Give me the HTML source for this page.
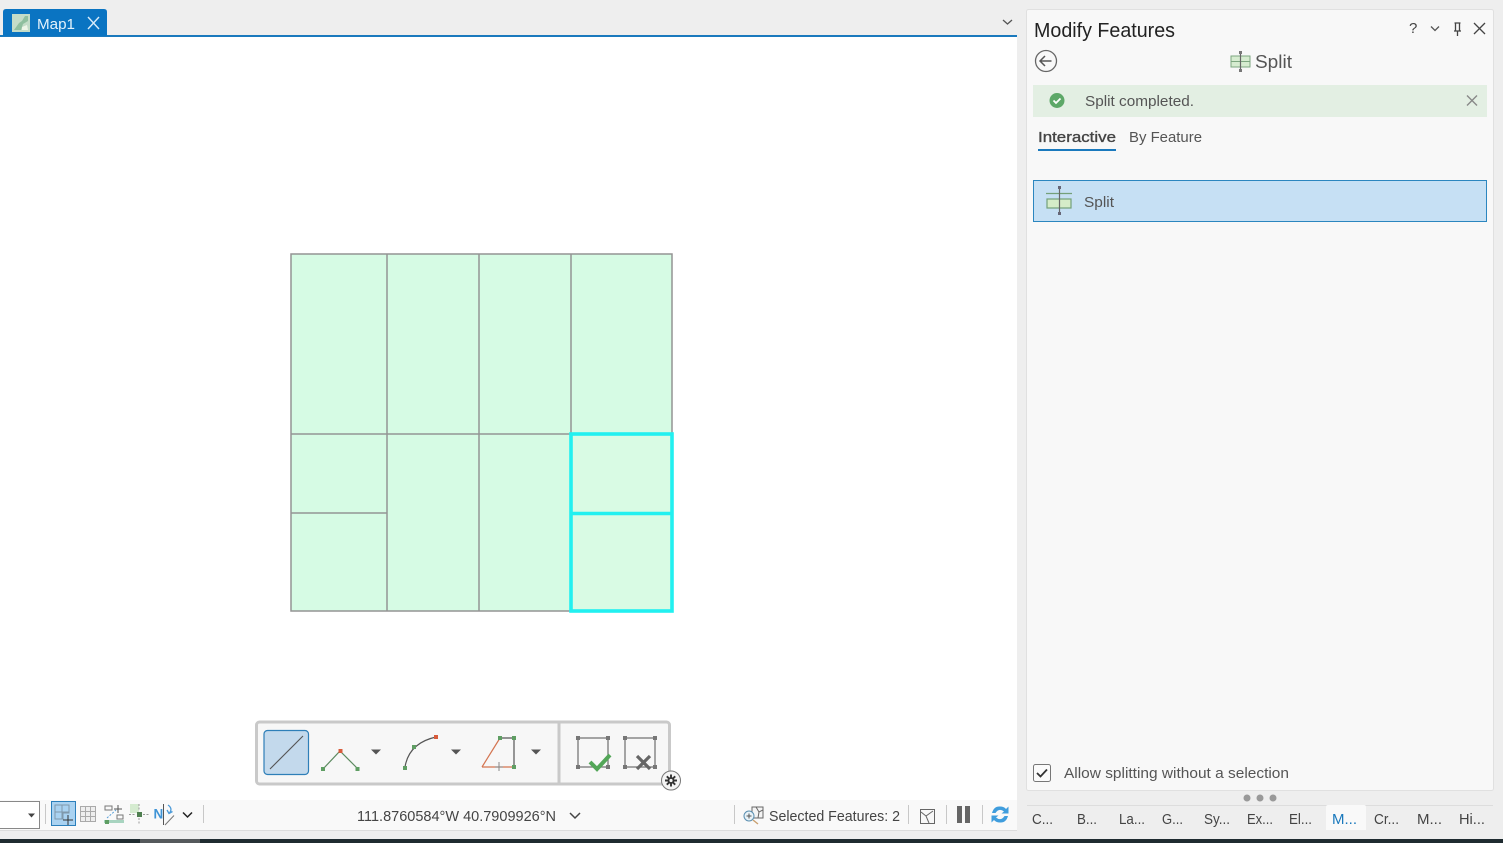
<!DOCTYPE html>
<html><head><meta charset="utf-8"><style>
html,body{margin:0;padding:0;background:#eee;overflow:hidden}
svg{display:block}
text{font-family:"Liberation Sans",sans-serif;fill:#444;font-size:14.5px}
</style></head><body>
<svg width="1503" height="843" viewBox="0 0 1503 843" xmlns="http://www.w3.org/2000/svg">
<rect width="1503" height="843" fill="#eeeeee"/>
<!-- map area -->
<rect x="0" y="37" width="1017" height="763" fill="#ffffff"/>
<rect x="0" y="35" width="1017" height="2" fill="#1a79bd"/>
<!-- tab -->
<path d="M3 36V12q0-3 3-3h98q3 0 3 3v24z" fill="#0a74c2"/>
<rect x="12" y="14" width="18" height="18" fill="#c3dcc8"/>
<path d="M14 30l5-7 3-2 3-5h3v5l-5 3-2 6z" fill="#8fbf9f"/><path d="M22 27l5-2 1 5h-6z" fill="#eef5e8"/>
<text x="37" y="29" style="fill:#e3f1fb;font-size:15px" textLength="38" lengthAdjust="spacingAndGlyphs">Map1</text>
<path d="M88 17l11 12M99 17l-11 12" stroke="#d9ecfa" stroke-width="1.4" fill="none"/>
<path d="M1003 20l4.500 4 4.500-4" stroke="#555" stroke-width="1.3" fill="none"/>
<!-- grid -->
<rect x="291" y="254" width="381" height="357" fill="#d6fbe4" stroke="#949494" stroke-width="1.500"/>
<path d="M387 254V611M479 254V611M571 254V433M291 434H571M291 513H387" stroke="#949494" stroke-width="1.500" fill="none"/>
<rect x="571" y="434" width="101" height="177" fill="#d9fbe4" stroke="#22f0f0" stroke-width="3.600"/>
<path d="M571 513.500H672" stroke="#22f0f0" stroke-width="3.600"/>
<!-- toolbar -->
<rect x="256.500" y="722" width="413" height="62" rx="3" fill="#f7f7f7" stroke="#c9c9c9" stroke-width="3"/>
<rect x="557.500" y="722" width="3" height="62" fill="#c9c9c9"/>
<rect x="264" y="730.500" width="44.500" height="44" rx="3.500" fill="#c3d9ec" stroke="#2e7fb8" stroke-width="1.200"/>
<path d="M270 769l33-33" stroke="#555" stroke-width="1.100"/>
<path d="M323 769l17-18 18 18" stroke="#5c8a60" stroke-width="1.200" fill="none"/>
<rect x="321" y="767" width="4" height="4" fill="#5f9e63"/><rect x="355.500" y="767" width="4" height="4" fill="#5f9e63"/><rect x="338.500" y="749" width="4" height="4" fill="#d85c3c"/>
<path d="M371 749.500h10l-5 5z" fill="#555"/>
<path d="M405 767q4-24 31-30" stroke="#555" stroke-width="1.200" fill="none"/>
<rect x="403" y="766" width="4" height="4" fill="#5f9e63"/><rect x="412" y="745" width="4" height="4" fill="#5f9e63"/><rect x="434" y="735" width="4" height="4" fill="#d85c3c"/>
<path d="M451 749.500h10l-5 5z" fill="#555"/>
<path d="M482 767l18-29" stroke="#d47450" stroke-width="1.200" fill="none"/><path d="M482 767h32" stroke="#d47450" stroke-width="1.200" fill="none"/>
<path d="M500 738h14v29" stroke="#555" stroke-width="1.200" fill="none"/>
<path d="M499 762v9M495 767h8" stroke="#888" stroke-width="1"/>
<rect x="498" y="736" width="4" height="4" fill="#5f9e63"/><rect x="512" y="736" width="4" height="4" fill="#5f9e63"/><rect x="512" y="765" width="4" height="4" fill="#5f9e63"/>
<path d="M531 749.500h10l-5 5z" fill="#555"/>
<rect x="578" y="738" width="30" height="29" fill="none" stroke="#777" stroke-width="1.300"/>
<g fill="#777"><rect x="576" y="736" width="4" height="4"/><rect x="606" y="736" width="4" height="4"/><rect x="576" y="765" width="4" height="4"/><rect x="606" y="765" width="4" height="4"/></g>
<path d="M590 762l7 7 13-14" stroke="#53a658" stroke-width="4" fill="none"/>
<rect x="625" y="738" width="30" height="29" fill="none" stroke="#777" stroke-width="1.300"/>
<g fill="#777"><rect x="623" y="736" width="4" height="4"/><rect x="653" y="736" width="4" height="4"/><rect x="623" y="765" width="4" height="4"/><rect x="653" y="765" width="4" height="4"/></g>
<path d="M637 756l13 13M650 756l-13 13" stroke="#666" stroke-width="3.200"/>
<circle cx="671" cy="780.500" r="9.500" fill="#f4f4f4" stroke="#777" stroke-width="1"/>
<path d="M671 774.500v12M665 780.500h12M666.800 776.300l8.400 8.400M675.200 776.300l-8.400 8.400" stroke="#333" stroke-width="1.900"/>
<circle cx="671" cy="780.500" r="3.400" fill="#333"/>
<circle cx="671" cy="780.500" r="1.600" fill="#f4f4f4"/>
<!-- status bar -->
<rect x="0" y="800" width="1017" height="30" fill="#f9f9f9"/>
<rect x="0" y="830" width="1017" height="1" fill="#dcdcdc"/>
<rect x="-2" y="801.500" width="41.500" height="27" fill="#fff" stroke="#888" stroke-width="1"/>
<path d="M28 813.500h7l-3.500 4z" fill="#444"/>
<rect x="45" y="804" width="1" height="20" fill="#c8c8c8"/>
<rect x="51.500" y="801.500" width="24" height="24" fill="#a9d2f1" stroke="#2b7fbb" stroke-width="1"/>
<path d="M55 805h14v8h-6v6h-8zM55 812h14M62 805v14" fill="none" stroke="#7f98ab" stroke-width="1"/>
<path d="M68 815v10M63 820h10" stroke="#333" stroke-width="1"/>
<rect x="80.500" y="806.500" width="15" height="15" fill="#eee" stroke="#aaa"/>
<path d="M85.500 806v16M90.500 806v16M80 811.500h16M80 816.500h16" stroke="#aaa" stroke-width="1"/>
<rect x="105" y="806" width="7" height="4" fill="none" stroke="#777"/><path d="M118 805v8M114 809h8" stroke="#555"/>
<rect x="104" y="820" width="20" height="3" fill="#a8d4c0"/><rect x="105" y="820" width="4" height="4" fill="#5f9e63"/>
<rect x="117" y="815" width="6" height="4" fill="none" stroke="#777"/>
<path d="M107 818l9-8" stroke="#5aa0d8" stroke-dasharray="2 1.500"/>
<rect x="130" y="804" width="9" height="9" fill="#d5ebd0"/>
<rect x="137" y="812" width="5" height="5" fill="#4f7f50"/>
<path d="M129 814.500h7M143 814.500h6M139 804v7M139 818v7" stroke="#999" stroke-width="1" stroke-dasharray="2 1.500"/>
<text x="153.500" y="818.500" style="fill:#3f94d6;font-size:13.500px;font-weight:bold">N</text>
<path d="M163.500 804v21" stroke="#555" stroke-width="1"/><path d="M165 825l9-9.500" stroke="#777"/>
<path d="M168 805q5 3.500 1.500 8M167 810l2 3.500 3.500-2" stroke="#4b9ad8" stroke-width="1.300" fill="none"/>
<path d="M183 812.500l4.500 4.500 4.500-4.500" stroke="#222" stroke-width="1.500" fill="none"/>
<rect x="203" y="805" width="1" height="18" fill="#c8c8c8"/>
<text x="357" y="821" textLength="199" lengthAdjust="spacingAndGlyphs">111.8760584°W 40.7909926°N</text>
<path d="M570 813l5 5 5-5" stroke="#444" stroke-width="1.500" fill="none"/>
<rect x="734" y="805" width="1" height="19" fill="#c8c8c8"/>
<rect x="752" y="807" width="11" height="11" fill="#f4f4f4" stroke="#666"/><path d="M756 807l3 5 4-2M759 812l-1 6" stroke="#666" fill="none"/>
<circle cx="749" cy="816" r="5" fill="#e8f2f8" stroke="#5a8fb0" stroke-width="1"/><path d="M746.500 816h5M749 813.500v5" stroke="#555"/><path d="M753 820l5 4" stroke="#c9a070" stroke-width="1.400"/>
<text x="769" y="821" textLength="131" lengthAdjust="spacingAndGlyphs">Selected Features: 2</text>
<rect x="908" y="805" width="1" height="19" fill="#c8c8c8"/>
<rect x="920.500" y="809.500" width="14" height="14" fill="#f8f8f8" stroke="#666"/><path d="M921 812l5 4 7-5M926 816l3 7" stroke="#666" fill="none"/>
<rect x="946" y="805" width="1" height="19" fill="#c8c8c8"/>
<rect x="957" y="806" width="5" height="17" fill="#666"/><rect x="965" y="806" width="5" height="17" fill="#666"/>
<rect x="982" y="805" width="1" height="19" fill="#c8c8c8"/>
<path d="M992 813q2-7 8-6.500q4 0 6 2.500l2.500-2.500v7h-7l2.500-2q-5-4-8.500 1.500z" fill="#3f9ddd"/>
<path d="M1008 816q-2 7-8 6.500q-4 0-6-2.500l-2.500 2.500v-7h7l-2.500 2q5 4 8.500-1.500z" fill="#3f9ddd"/>
<!-- bottom -->
<rect x="0" y="839" width="1503" height="4" fill="#1f2b30"/>
<rect x="140" y="839" width="60" height="4" fill="#55595c"/>
<!-- panel -->
<rect x="1026.500" y="9.500" width="467" height="781" rx="2" fill="#f8f8f8" stroke="#e0e0e0" stroke-width="1"/>
<text x="1034" y="37" style="font-size:20.500px;fill:#222" textLength="141" lengthAdjust="spacingAndGlyphs">Modify Features</text>
<text x="1409" y="33" style="font-size:15px;fill:#444">?</text>
<path d="M1431 26.500l4 4 4-4" stroke="#555" stroke-width="1.300" fill="none"/>
<path d="M1454.500 23h6M1455.500 23v8M1459.500 23v8M1454 31h7M1457.500 31v5" stroke="#444" stroke-width="1.300" fill="none"/>
<path d="M1474 23l11 11M1485 23l-11 11" stroke="#444" stroke-width="1.300"/>
<circle cx="1046" cy="61" r="10.500" fill="none" stroke="#666" stroke-width="1.300"/>
<path d="M1051.500 61h-11M1045 56l-5 5 5 5" stroke="#555" stroke-width="1.500" fill="none"/>
<rect x="1231" y="56" width="19" height="11" fill="#d6ecd0" stroke="#7da680" stroke-width="1"/>
<path d="M1231 61.500h19" stroke="#7da680"/><path d="M1240.500 52v20" stroke="#666" stroke-width="1.200"/>
<rect x="1239" y="51" width="3" height="3" fill="#777"/><rect x="1239" y="69" width="3" height="3" fill="#777"/>
<text x="1255" y="68" style="font-size:18.500px;fill:#555" textLength="37" lengthAdjust="spacingAndGlyphs">Split</text>
<rect x="1033" y="85" width="454" height="32" fill="#e3efe3"/>
<circle cx="1057" cy="100.500" r="7.500" fill="#5da868"/>
<path d="M1053.500 100.500l2.500 2.500 4.500-4.500" stroke="#fff" stroke-width="1.800" fill="none"/>
<text x="1085" y="106" textLength="109" lengthAdjust="spacingAndGlyphs" style="fill:#555">Split completed.</text>
<path d="M1467 95.500l10 10M1477 95.500l-10 10" stroke="#888" stroke-width="1.400"/>
<text x="1038" y="142" textLength="78" lengthAdjust="spacingAndGlyphs" style="fill:#444;font-size:14.500px;stroke:#444;stroke-width:.35px">Interactive</text>
<rect x="1038" y="149" width="78" height="2" fill="#1a79bd"/>
<text x="1129" y="142" textLength="73" lengthAdjust="spacingAndGlyphs" style="fill:#555">By Feature</text>
<rect x="1033.500" y="180.500" width="453" height="41" fill="#c6e0f4" stroke="#2b86bf" stroke-width="1"/>
<rect x="1047" y="199" width="24" height="9" fill="#d5ecc8" stroke="#74a07a" stroke-width="1.200"/>
<path d="M1046 193.500h26" stroke="#74a07a" stroke-width="1.200"/><path d="M1059.500 187v27" stroke="#666" stroke-width="1.200"/>
<rect x="1058" y="186" width="3" height="3" fill="#667"/><rect x="1058" y="212" width="3" height="3" fill="#667"/>
<text x="1084" y="207" textLength="30" lengthAdjust="spacingAndGlyphs" style="fill:#555">Split</text>
<rect x="1033.500" y="764.500" width="17" height="17" rx="2" fill="#fbfbfb" stroke="#777" stroke-width="1"/>
<path d="M1037 773l3.500 3.500 6.500-7" stroke="#333" stroke-width="1.800" fill="none"/>
<text x="1064" y="778" textLength="225" lengthAdjust="spacingAndGlyphs" style="fill:#555">Allow splitting without a selection</text>
<!-- pane tabs -->
<rect x="1027" y="791" width="466" height="14" fill="#eeeeee"/>
<circle cx="1247" cy="798" r="3.500" fill="#999"/><circle cx="1260" cy="798" r="3.500" fill="#999"/><circle cx="1273" cy="798" r="3.500" fill="#999"/>
<rect x="1027" y="805" width="466" height="1" fill="#ddd"/>
<path d="M1326 830v-23q0-2 2-2h36q2 0 2 2v23z" fill="#f9f9f9"/>
<g style="font-size:14px">
<text x="1032" y="824" textLength="21" lengthAdjust="spacingAndGlyphs">C...</text>
<text x="1077" y="824" textLength="20" lengthAdjust="spacingAndGlyphs">B...</text>
<text x="1119" y="824" textLength="26" lengthAdjust="spacingAndGlyphs">La...</text>
<text x="1162" y="824" textLength="21" lengthAdjust="spacingAndGlyphs">G...</text>
<text x="1204" y="824" textLength="26" lengthAdjust="spacingAndGlyphs">Sy...</text>
<text x="1247" y="824" textLength="26" lengthAdjust="spacingAndGlyphs">Ex...</text>
<text x="1289" y="824" textLength="23" lengthAdjust="spacingAndGlyphs">El...</text>
<text x="1332" y="824" textLength="25" lengthAdjust="spacingAndGlyphs" style="fill:#1a79bd">M...</text>
<text x="1374" y="824" textLength="25" lengthAdjust="spacingAndGlyphs">Cr...</text>
<text x="1417" y="824" textLength="25" lengthAdjust="spacingAndGlyphs">M...</text>
<text x="1459" y="824" textLength="26" lengthAdjust="spacingAndGlyphs">Hi...</text>
</g>
</svg>
</body></html>
